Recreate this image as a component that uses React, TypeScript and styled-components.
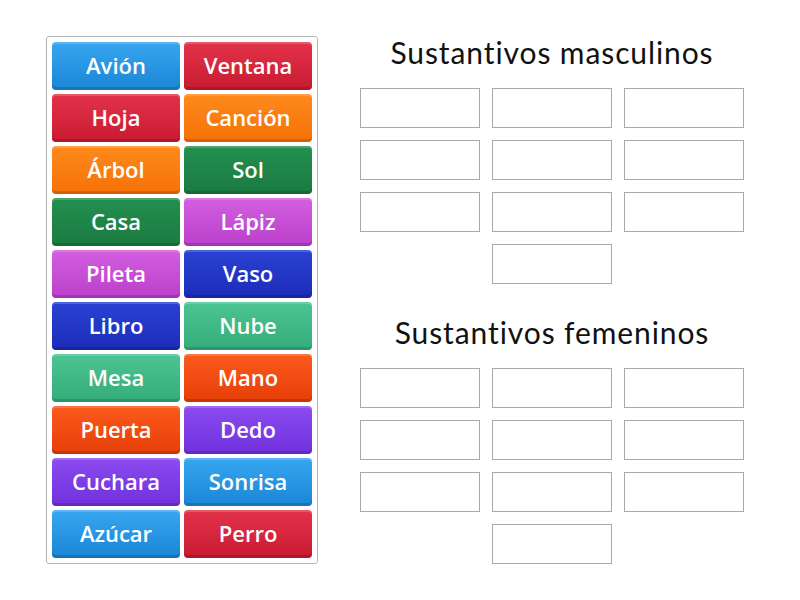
import styled, { createGlobalStyle } from 'styled-components';

const GlobalStyle = createGlobalStyle`
  html, body {
    margin: 0;
    padding: 0;
    background: #ffffff;
  }
  body {
    font-family: Lato, "Open Sans", sans-serif;
  }
`;

const Page = styled.div`
  display: flex;
  align-items: flex-start;
  gap: 42px;
  padding: 36px 0 0 46px;
  width: 800px;
  height: 600px;
  box-sizing: border-box;
`;

const TilePanel = styled.div`
  display: grid;
  grid-template-columns: 128px 128px;
  grid-auto-rows: 48px;
  gap: 4px;
  padding: 5px;
  border: 1px solid #b4b4b4;
  border-radius: 3px;
`;

const palette: Record<string, [string, string]> = {
  blue: ['#37a6f0', '#1a86d6'],
  red: ['#e2334b', '#c81a30'],
  orange: ['#ff8a1c', '#f57208'],
  green: ['#23904f', '#1a7a41'],
  magenta: ['#d35fe0', '#bb3fcb'],
  navy: ['#2a42d4', '#1c2cb8'],
  mint: ['#4cc592', '#35ad7b'],
  flame: ['#fb5a1e', '#e63e08'],
  purple: ['#8b4bf0', '#7030dc'],
};

const Tile = styled.div<{ $tone: string }>`
  display: flex;
  align-items: center;
  justify-content: center;
  padding-bottom: 3px;
  box-sizing: border-box;
  border-radius: 4px;
  background: linear-gradient(
    180deg,
    ${(p) => palette[p.$tone][0]} 0%,
    ${(p) => palette[p.$tone][1]} 100%
  );
  box-shadow: inset 0 2px 0 rgba(255, 255, 255, 0.18),
    inset 0 -3px 0 rgba(0, 0, 0, 0.14);
  color: #ffffff;
  font-family: "Open Sans", Lato, sans-serif;
  font-weight: 600;
  font-size: 22px;
  letter-spacing: 0;
`;

const Groups = styled.div`
  display: flex;
  flex-direction: column;
  gap: 28px;
  width: 384px;
  margin-top: -4px;
`;

const Group = styled.section`
  display: flex;
  flex-direction: column;
  gap: 16px;
`;

const GroupTitle = styled.h2`
  margin: 0;
  height: 40px;
  line-height: 40px;
  text-align: center;
  font-family: Lato, "Open Sans", sans-serif;
  font-weight: 400;
  font-size: 30px;
  letter-spacing: 0.9px;
  color: #111111;
`;

const Slots = styled.div`
  display: flex;
  flex-wrap: wrap;
  justify-content: center;
  gap: 12px;
`;

const Slot = styled.div`
  width: 120px;
  height: 40px;
  box-sizing: border-box;
  border: 1px solid #a8a8a8;
  background: #ffffff;
`;

const tiles: [string, string][] = [
  ['Avión', 'blue'],
  ['Ventana', 'red'],
  ['Hoja', 'red'],
  ['Canción', 'orange'],
  ['Árbol', 'orange'],
  ['Sol', 'green'],
  ['Casa', 'green'],
  ['Lápiz', 'magenta'],
  ['Pileta', 'magenta'],
  ['Vaso', 'navy'],
  ['Libro', 'navy'],
  ['Nube', 'mint'],
  ['Mesa', 'mint'],
  ['Mano', 'flame'],
  ['Puerta', 'flame'],
  ['Dedo', 'purple'],
  ['Cuchara', 'purple'],
  ['Sonrisa', 'blue'],
  ['Azúcar', 'blue'],
  ['Perro', 'red'],
];

const groups = ['Sustantivos masculinos', 'Sustantivos femeninos'];

function App() {
  return (
    <>
      <GlobalStyle />
      <Page>
        <TilePanel>
          {tiles.map(([word, tone]) => (
            <Tile key={word} $tone={tone}>
              {word}
            </Tile>
          ))}
        </TilePanel>
        <Groups>
          {groups.map((title) => (
            <Group key={title}>
              <GroupTitle>{title}</GroupTitle>
              <Slots>
                {Array.from({ length: 10 }).map((_, i) => (
                  <Slot key={i} />
                ))}
              </Slots>
            </Group>
          ))}
        </Groups>
      </Page>
    </>
  );
}

export default App;
